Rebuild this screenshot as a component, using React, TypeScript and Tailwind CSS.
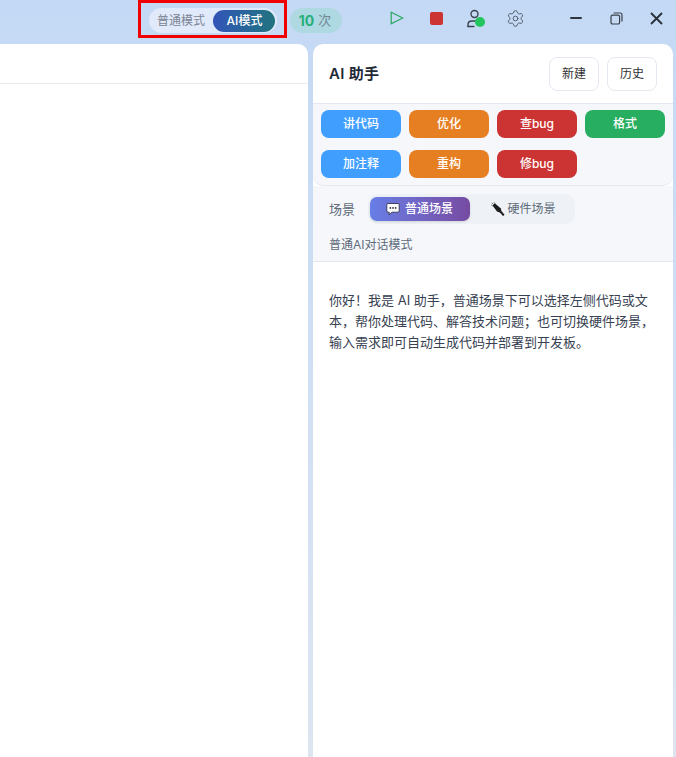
import { Settings } from "lucide-react";

const tools = [
  ["讲代码", "bg-[#409eff]"],
  ["优化", "bg-[#e67e22]"],
  ["查bug", "bg-[#cc3333]"],
  ["格式", "bg-[#27ae60]"],
  ["加注释", "bg-[#409eff]"],
  ["重构", "bg-[#e67e22]"],
  ["修bug", "bg-[#cc3333]"],
];

function Plug() {
  return (
    <svg width="14" height="14" viewBox="0 0 14 14">
      <path d="M1.5 3.6 3.8 1.2 9.6 6.2 10.4 8.6 8.6 10.4 6 9.4Z" fill="#1c1c1c" />
      <path d="M9 9 12.8 13.4" stroke="#1c1c1c" strokeWidth="2" />
      <path d="M0.8 0.8 2.4 2.4M3 0.3 4 1.6M0.3 3 1.6 4" stroke="#444" strokeWidth="0.8" />
    </svg>
  );
}

function Chat() {
  return (
    <svg width="14" height="14" viewBox="0 0 14 14">
      <path d="M2 1.5H12Q13.2 1.5 13.2 2.7V9Q13.2 10.2 12 10.2H6L3.2 12.8V10.2H2Q0.8 10.2 0.8 9V2.7Q0.8 1.5 2 1.5Z" fill="#fff" stroke="#2f3550" strokeWidth="0.9" />
      <circle cx="4.4" cy="5.9" r="0.9" fill="#333" />
      <circle cx="7" cy="5.9" r="0.9" fill="#333" />
      <circle cx="9.6" cy="5.9" r="0.9" fill="#333" />
    </svg>
  );
}

export default function App() {
  return (
    <div
      className="relative flex h-[757px] w-[676px] flex-col overflow-hidden bg-gradient-to-b from-[#c4d9f5] to-[#dde5f1] text-[#303133]"
      style={{ fontFamily: '"Inter", "Noto Sans CJK SC", sans-serif' }}
    >
      <header className="flex h-[44px] shrink-0 items-start">
        <div className="ml-[149px] mt-[8px] flex h-[25px] w-[128px] items-center rounded-full bg-[#e1eafa] pl-[8px] pr-[2px]">
          <span className="w-[56px] whitespace-nowrap text-[12px] text-[#7b8494]">普通模式</span>
          <span className="flex h-[22px] w-[62px] items-center justify-center rounded-full bg-gradient-to-r from-[#3353b8] to-[#22737f] pl-[1px] text-[12px] font-medium text-white">
            AI模式
          </span>
        </div>
        <div className="ml-[13px] mt-[8px] flex h-[25px] w-[52px] items-center justify-center gap-[4px] rounded-full bg-[#aed8e2] pr-[2px] text-[13px] text-[#6f8794]">
          <span className="text-[14px] font-bold leading-none text-[#27b07a]">10</span>
          <span>次</span>
        </div>
        <div className="ml-[48px] mt-[9px] flex h-[18px] items-center">
          <svg width="14" height="14" viewBox="0 0 14 14" fill="none" stroke="#27a75f" strokeWidth="1.2" strokeLinejoin="miter">
            <path d="M1.2 1.2 12.8 7 1.2 12.8Z" />
          </svg>
          <div className="ml-[26px] h-[13px] w-[13px] rounded-[2px] bg-[#cc3333]" />
          <div className="relative ml-[23px] mt-[2px] h-[20px] w-[20px]">
            <svg width="20" height="20" viewBox="0 0 20 20" fill="none" stroke="#3c4350" strokeWidth="1.4">
              <circle cx="8.5" cy="5" r="3.5" />
              <path d="M2 17.5V15.6Q2 12 6 12H10" strokeLinecap="round" />
              <path d="M2 17.5H8" strokeLinecap="round" />
            </svg>
            <span className="absolute left-[9px] top-[8px] h-[10px] w-[10px] rounded-full bg-[#22c55e]" />
          </div>
          <Settings size={19} strokeWidth={1.15} className="ml-[20px] text-[#4b5563]" />
          <div className="ml-[45px] h-[2px] w-[12px] rounded-full bg-[#2f3540]" />
          <svg className="ml-[28px]" width="13" height="13" viewBox="0 0 13 13" fill="none" stroke="#3a404b" strokeWidth="1.2">
            <rect x="1" y="3.2" width="8.6" height="8.8" rx="1.6" />
            <path d="M3.6 1H10.2Q12 1 12 2.8V9.4" />
          </svg>
          <svg className="ml-[27px]" width="13" height="13" viewBox="0 0 13 13" fill="none" stroke="#2a2f38" strokeWidth="1.8">
            <path d="M1 1 12 12M12 1 1 12" />
          </svg>
        </div>
      </header>
      <main className="flex min-h-0 flex-1 pr-[3px]">
        <section className="w-[308px] rounded-tr-[10px] bg-white">
          <div className="h-[40px] border-b border-[#e8eaee]" />
        </section>
        <aside className="ml-[5px] flex min-w-0 flex-1 flex-col rounded-t-[10px] bg-white">
          <div className="flex h-[59px] shrink-0 items-center justify-between pl-[16px] pr-[16px]">
            <span className="pt-[1px] text-[15px] font-semibold tracking-[0.3px] text-[#1f2937]">AI 助手</span>
            <div className="flex gap-[8px]">
              <button className="h-[34px] w-[50px] rounded-[8px] border border-[#e4e8f0] bg-white text-[12px] text-[#303133]">新建</button>
              <button className="h-[34px] w-[50px] rounded-[8px] border border-[#e4e8f0] bg-white text-[12px] text-[#303133]">历史</button>
            </div>
          </div>
          <div className="grid shrink-0 grid-cols-4 gap-x-[8px] gap-y-[12px] rounded-b-[10px] border-y border-[#e4e8f0] bg-[#f5f7fb] px-[8px] pb-[7px] pt-[6px]">
            {tools.map(([label, color]) => (
              <button key={label} className={`h-[28px] rounded-[8px] text-[12px] font-medium text-white ${color}`}>
                {label}
              </button>
            ))}
          </div>
          <div className="h-[76px] shrink-0 border-b border-[#e4e8f0] bg-[#f5f7fb] px-[16px]">
            <div className="mt-[8px] flex items-center">
              <span className="pt-[1px] text-[13px] text-[#5f6b7a]">场景</span>
              <div className="ml-[13px] flex h-[30px] w-[207px] items-center rounded-[10px] bg-[#eef2f6] pl-[2px]">
                <span className="flex h-[24px] w-[100px] items-center justify-center gap-[5px] rounded-[7px] bg-gradient-to-r from-[#667ee6] to-[#764ba2] pr-[1px] text-[12px] font-medium text-white shadow-sm">
                  <Chat />
                  普通场景
                </span>
                <span className="ml-[3px] flex h-[24px] w-[100px] items-center justify-center gap-[3px] text-[12px] text-[#5f6b7a]">
                  <Plug />
                  硬件场景
                </span>
              </div>
            </div>
            <p className="mt-[12px] text-[12px] text-[#5f6b7a]">普通AI对话模式</p>
          </div>
          <p className="px-[16px] pt-[28px] text-[13px] leading-[21px] text-[#374151]">
            你好！我是 AI 助手，普通场景下可以选择左侧代码或文本，帮你处理代码、解答技术问题；也可切换硬件场景，输入需求即可自动生成代码并部署到开发板。
          </p>
        </aside>
      </main>
      <div className="absolute left-[138px] top-0 h-[38px] w-[149px] border-[3px] border-[#f00000]" />
    </div>
  );
}
